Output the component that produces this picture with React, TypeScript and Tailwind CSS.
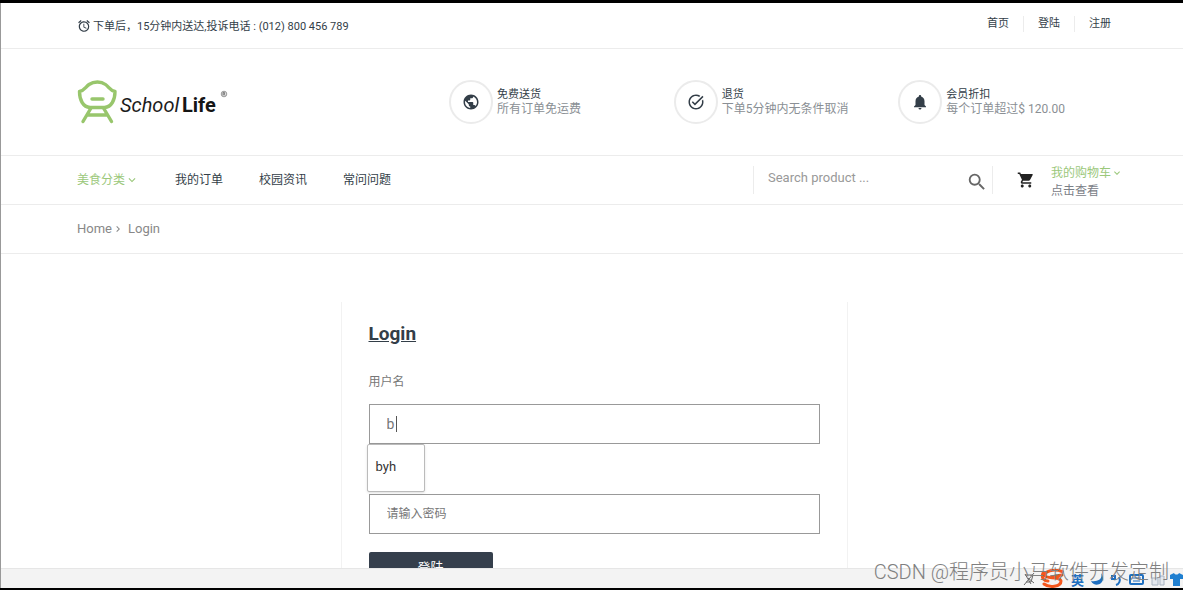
import { useState } from "react";
import {
  MdAlarm,
  MdKeyboardArrowDown,
  MdKeyboardArrowRight,
  MdNotifications,
  MdPublic,
  MdSearch,
  MdShoppingCart,
  MdTaskAlt,
} from "react-icons/md";
import type { IconType } from "react-icons";

const features: Array<{ icon: IconType; title: string; text: string }> = [
  { icon: MdPublic, title: "免费送货", text: "所有订单免运费" },
  { icon: MdTaskAlt, title: "退货", text: "下单5分钟内无条件取消" },
  { icon: MdNotifications, title: "会员折扣", text: "每个订单超过$ 120.00" },
];

const topLinks = ["首页", "登陆", "注册"];
const navLinks = ["我的订单", "校园资讯", "常问问题"];

function Logo() {
  return (
    <a href="#" className="flex items-center" aria-label="SchoolLife">
      <svg width="152" height="46" viewBox="0 0 152 46">
        <g
          fill="none"
          stroke="#98c66c"
          strokeWidth="3.4"
          strokeLinecap="round"
          strokeLinejoin="round"
        >
          <path d="M2.5 12.5C7.5 11.5 8.500 8 12 5.500C17 2.200 24 2.200 28.500 5.500C32 8 33 11.500 38 12.500C38 21 34.500 28 27.500 28.500H13C6 28 2.500 21 2.500 12.500Z" />
          <path d="M15 20H26" />
          <path d="M14 29L6 42.500M26.500 29L34.500 42.500M11 36H29.500" />
        </g>
        <text
          x="43"
          y="33"
          fill="#1c1c1c"
          fontFamily="'Liberation Sans Narrow', Roboto, sans-serif"
          fontSize="20"
          fontStyle="italic"
        >
          School
        </text>
        <text
          x="105"
          y="33"
          fill="#151515"
          fontFamily="'Liberation Sans Narrow', Roboto, sans-serif"
          fontSize="20"
          fontWeight="700"
        >
          Life
        </text>
        <circle cx="147" cy="15" r="2.800" fill="#ddd" stroke="#888" strokeWidth="0.800" />
        <path d="M146 16.500V13.500H147.500V15H146M147 15L148 16.500" fill="none" stroke="#666" strokeWidth="0.700" />
      </svg>
    </a>
  );
}

function InputTools() {
  return (
    <svg width="162" height="20" viewBox="0 0 162 20">
      <path
        d="M4 5L10 15M13 4L3 16M4 6H12L10 13H5M7 9L13 14"
        fill="none"
        stroke="#666"
      />
      <path
        d="M41 2.500C32 -1 23 3 24 7C26 10 39 7 40 12C40 18 28 19 23 15M22 4C20 9 23 12 27 12M30 8L41 6"
        fill="none"
        stroke="#f4561c"
        strokeWidth="3"
        strokeLinecap="round"
      />
      <text
        x="50"
        y="16"
        fill="#1f6fc0"
        fontFamily="'Noto Sans CJK SC', sans-serif"
        fontWeight="700"
        fontSize="13"
      >
        英
      </text>
      <path d="M80 4C82 10 77 13 70 12C74 20 87 14 80 4Z" fill="#1f6fc0" />
      <path d="M91 7H94V10H91ZM98 8C100 12 98 15 95 16" fill="none" stroke="#1f6fc0" strokeWidth="2" />
      <rect x="109" y="6" width="13" height="9" rx="1" fill="none" stroke="#1f6fc0" strokeWidth="2" />
      <path d="M111 9H120M112 12H119" stroke="#1f6fc0" />
      <path d="M131 9H137V16H131ZM139 7H143V16H139Z" fill="#e4e8ee" stroke="#a9b4c2" />
      <path d="M149 6L153 4C154 6 157 6 158 4L162 6V10H159V17H152V10H149Z" fill="#1f7fd0" />
    </svg>
  );
}

export default function App() {
  const [username, setUsername] = useState("b");

  return (
    <div className="flex h-screen flex-col overflow-hidden border-t-3 border-b-2 border-black bg-white font-[Roboto,'Noto_Sans_CJK_SC',sans-serif] text-xs text-[#333e48]">
      <div className="flex min-h-0 flex-1 flex-col overflow-hidden border-l border-[#999]">
        {/* TOP BAR */}
        <div className="flex h-[46px] shrink-0 items-center justify-between border-b border-[#ececec] pr-15 pl-19 text-[11px]">
          <p className="flex items-center gap-0.5 pt-1">
            <MdAlarm size={14} className="mb-1" />
            下单后，15分钟内送达,投诉电话 : (012) 800 456 789
          </p>
          <ul className="flex divide-x divide-[#ececec] pb-1">
            {topLinks.map((label) => (
              <li key={label} className="px-3.5 leading-4 last:pr-3">
                <a href="#">{label}</a>
              </li>
            ))}
          </ul>
        </div>

        {/* LOGO + FEATURES */}
        <header className="flex h-[107px] shrink-0 items-center border-b border-[#ececec] pr-15 pl-19">
          <div className="w-[372px] shrink-0">
            <Logo />
          </div>
          <div className="grid flex-1 grid-cols-3">
            {features.map(({ icon: Icon, title, text }) => (
              <div key={title} className="flex items-center gap-1">
                <span className="flex size-11 items-center justify-center rounded-full border-2 border-[#ebebeb]">
                  <Icon size={18} />
                </span>
                <div>
                  <p className="text-[11px] leading-[15px]">{title}</p>
                  <p className="leading-[15px] text-[#8a8f94]">{text}</p>
                </div>
              </div>
            ))}
          </div>
        </header>

        {/* NAV */}
        <div className="box-content flex h-12 shrink-0 items-center justify-between border-b border-[#ececec] pr-15 pl-19">
          <nav className="flex items-center gap-9">
            <a href="#" className="flex items-center text-[#9bc87b]">
              美食分类
              <MdKeyboardArrowDown size={14} />
            </a>
            {navLinks.map((label) => (
              <a key={label} href="#">
                {label}
              </a>
            ))}
          </nav>
          <div className="flex items-center">
            <form className="flex h-7 w-60 items-center border-x border-[#ececec] pr-1 pl-3.5">
              <input
                type="text"
                aria-label="Search product"
                placeholder="Search product ..."
                className="min-w-0 flex-1 pb-1 text-[13px] outline-none placeholder:text-[#999]"
              />
              <button type="button" aria-label="Search" className="pt-1 text-[#666]">
                <MdSearch size={22} />
              </button>
            </form>
            <a href="#" className="flex items-center gap-4 pl-6">
              <MdShoppingCart size={18} className="text-[#222]" />
              <span className="pt-1 leading-[18px]">
                <span className="flex items-center text-[#9bc87b]">
                  我的购物车
                  <MdKeyboardArrowDown size={12} />
                </span>
                <span className="block text-[#7b8087]">点击查看</span>
              </span>
            </a>
          </div>
        </div>

        {/* BREADCRUMB */}
        <div className="flex h-[49px] shrink-0 items-center border-b border-[#ececec] pr-15 pl-19 text-[13px] text-[#888]">
          <a href="#">Home</a>
          <MdKeyboardArrowRight size={12} />
          <span className="pl-1">Login</span>
        </div>

        {/* LOGIN FORM */}
        <main className="flex min-h-0 flex-1 justify-center overflow-hidden pt-12 pl-1">
          <form className="h-80 w-full max-w-[507px] border-x border-[#f2f2f2] px-[27px] pt-5">
            <h1 className="text-[19px] leading-6 font-bold underline">Login</h1>
            <label htmlFor="username" className="mt-7 block leading-4 text-[#777]">
              用户名
            </label>
            <div className="relative mt-3.5">
              <input
                id="username"
                type="text"
                value={username}
                onChange={(e) => setUsername(e.target.value)}
                className="block h-10 w-full border border-[#999] px-[17px] text-sm text-[#777] outline-none"
              />
              {/* text cursor */}
              <span className="absolute top-3 left-[27px] h-4 w-px bg-[#555]" />
              <ul className="absolute top-full -left-0.5 h-12 w-[58px] rounded-xs border border-[#bbb] bg-white py-3 pl-2 text-[13px] leading-5 text-[#333] shadow-sm">
                <li>byh</li>
              </ul>
            </div>
            <input
              type="password"
              aria-label="密码"
              placeholder="请输入密码"
              className="mt-[50px] block h-10 w-full border border-[#999] px-[17px] outline-none placeholder:text-[#777]"
            />
            <button
              type="button"
              className="mt-[18px] h-8 w-31 rounded-xs bg-[#353f4c] text-[13px] text-white"
            >
              登陆
            </button>
          </form>
        </main>

        {/* STATUS BAR */}
        <footer className="relative flex h-5 shrink-0 justify-end border-t border-[#e6e6e6] bg-[#f3f3f3]">
          <InputTools />
          <p className="absolute right-3.5 bottom-0.5 text-xl leading-7 font-light whitespace-nowrap text-[#808080]">
            CSDN @程序员小马软件开发定制
          </p>
        </footer>
      </div>
    </div>
  );
}
